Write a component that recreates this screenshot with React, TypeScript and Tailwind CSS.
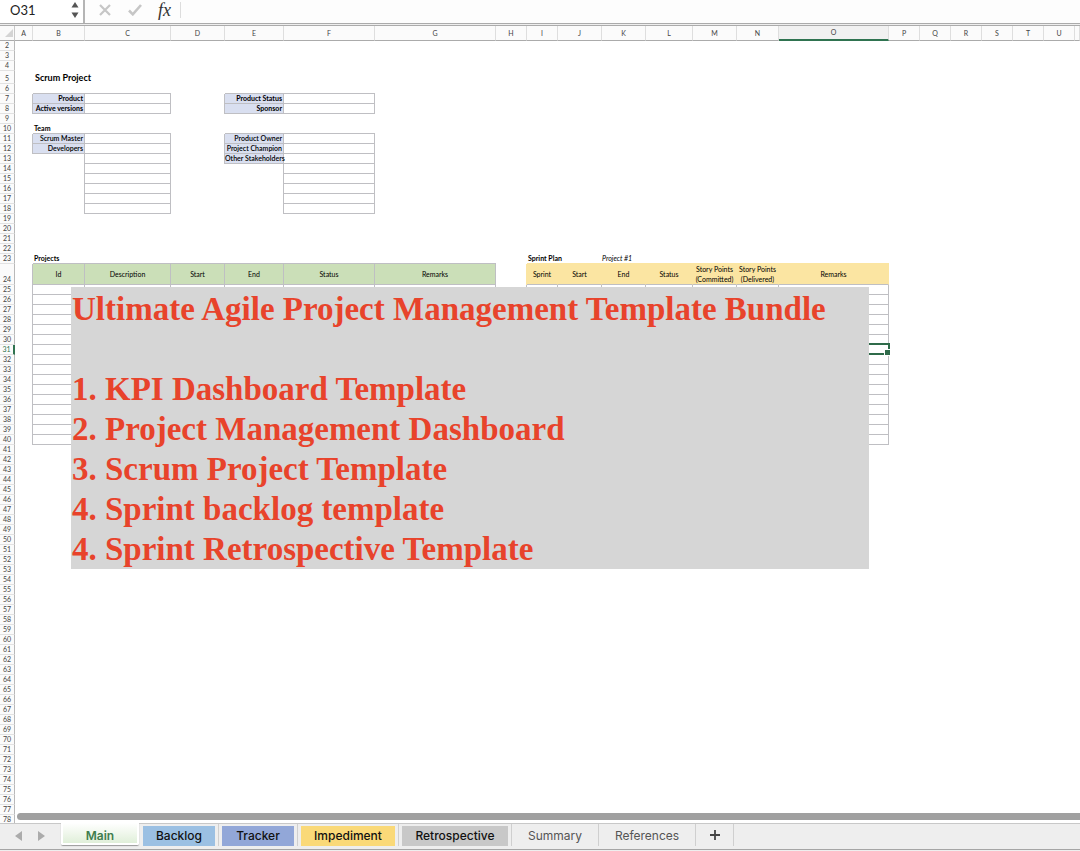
import React, { useState } from 'react';
import clsx from 'clsx';

interface Column {
  name: string;
  width: string;
}

interface Box {
  from: string;
  to: string;
  top: number;
  bottom: number;
}

interface CellContent {
  text: React.ReactNode;
  className: string;
}

interface SheetTab {
  name: string;
  className: string;
}

const columns: Column[] = [
  { name: 'A', width: 'w-[18px]' },
  { name: 'B', width: 'w-[52px]' },
  { name: 'C', width: 'w-[86px]' },
  { name: 'D', width: 'w-[54px]' },
  { name: 'E', width: 'w-[59px]' },
  { name: 'F', width: 'w-[91px]' },
  { name: 'G', width: 'w-[121px]' },
  { name: 'H', width: 'w-[31px]' },
  { name: 'I', width: 'w-[31px]' },
  { name: 'J', width: 'w-[44px]' },
  { name: 'K', width: 'w-[44px]' },
  { name: 'L', width: 'w-[47px]' },
  { name: 'M', width: 'w-[44px]' },
  { name: 'N', width: 'w-[42px]' },
  { name: 'O', width: 'w-[110px]' },
  { name: 'P', width: 'w-[31px]' },
  { name: 'Q', width: 'w-[31px]' },
  { name: 'R', width: 'w-[31px]' },
  { name: 'S', width: 'w-[31px]' },
  { name: 'T', width: 'w-[31px]' },
  { name: 'U', width: 'w-[31px]' },
  { name: '', width: '' },
];

const rows = Array.from({ length: 77 }, (_, i) => i + 2);

// Areas of the sheet that have grid lines
const boxes: Box[] = [
  { from: 'B', to: 'C', top: 7, bottom: 8 },
  { from: 'E', to: 'F', top: 7, bottom: 8 },
  { from: 'B', to: 'B', top: 11, bottom: 12 },
  { from: 'C', to: 'C', top: 11, bottom: 18 },
  { from: 'E', to: 'E', top: 11, bottom: 13 },
  { from: 'F', to: 'F', top: 11, bottom: 18 },
  { from: 'B', to: 'G', top: 24, bottom: 40 },
  { from: 'I', to: 'O', top: 25, bottom: 40 },
];

const label = 'bg-[#d9dff0] text-right font-bold pr-px';
const role = 'bg-[#d9dff0] text-right font-semibold pr-px';
const heading = 'text-left font-bold pl-px';
const green = 'bg-[#cbdfb8] text-center';
const yellow = 'bg-[#fbe5a2] text-center';

const cells: Record<string, CellContent> = {
  B5: { text: 'Scrum Project', className: 'text-left font-bold text-[9px] pl-[2px]' },
  B7: { text: 'Product', className: label },
  B8: { text: 'Active versions', className: label },
  E7: { text: 'Product Status', className: label },
  E8: { text: 'Sponsor', className: label },
  B10: { text: 'Team', className: heading },
  B11: { text: 'Scrum Master', className: role },
  B12: { text: 'Developers', className: role },
  E11: { text: 'Product Owner', className: role },
  E12: { text: 'Project Champion', className: role },
  E13: { text: 'Other Stakeholders', className: role },
  B23: { text: 'Projects', className: heading },
  I23: { text: 'Sprint Plan', className: heading },
  K23: { text: 'Project #1', className: 'text-left italic' },
  B24: { text: 'Id', className: green },
  C24: { text: 'Description', className: green },
  D24: { text: 'Start', className: green },
  E24: { text: 'End', className: green },
  F24: { text: 'Status', className: green },
  G24: { text: 'Remarks', className: green },
  I24: { text: 'Sprint', className: yellow },
  J24: { text: 'Start', className: yellow },
  K24: { text: 'End', className: yellow },
  L24: { text: 'Status', className: yellow },
  M24: { text: <>Story Points<br />(Committed)</>, className: yellow },
  N24: { text: <>Story Points<br />(Delivered)</>, className: yellow },
  O24: { text: 'Remarks', className: yellow },
};

const tabs: SheetTab[] = [
  { name: 'Backlog', className: 'w-[72px] bg-[#9bc0e3] text-[#111]' },
  { name: 'Tracker', className: 'w-[72px] bg-[#92a7d8] text-[#111]' },
  { name: 'Impediment', className: 'w-[94px] bg-[#fad978] text-[#111]' },
  { name: 'Retrospective', className: 'w-[106px] bg-[#c8c8c8] text-[#111]' },
  { name: 'Summary', className: 'w-20 font-normal text-[#555]' },
  { name: 'References', className: 'w-[90px] font-normal text-[#555]' },
];

const bundle = [
  '1. KPI Dashboard Template',
  '2. Project Management Dashboard',
  '3. Scrum Project Template',
  '4. Sprint backlog template',
  '4. Sprint Retrospective Template',
];

function inBox(col: string | undefined, row: number) {
  if (!col) return false;
  return boxes.some((b) => col >= b.from && col <= b.to && row >= b.top && row <= b.bottom);
}

function Cell({ index, row }: { index: number; row: number }) {
  const col = columns[index].name;
  const next = columns[index + 1]?.name;
  const content = cells[`${col}${row}`];
  const selected = col === 'O' && row === 31;
  const aboveYellow = row === 23 && col >= 'I' && col <= 'O';
  const besideYellow = row === 24 && col >= 'H' && col <= 'O';

  return (
    <td
      className={clsx(
        'p-0 align-middle whitespace-nowrap',
        row === 24 ? 'leading-[10px]' : 'leading-[9px]',
        (inBox(col, row) || inBox(next, row)) && 'border-r border-r-[#bfbfc3]',
        (inBox(col, row) || inBox(col, row + 1)) && 'border-b border-b-[#bfbfc3]',
        aboveYellow && 'border-b border-b-[#fbe5a2]',
        besideYellow && 'border-r border-r-[#fbe5a2]',
        selected && 'relative',
        content?.className
      )}
    >
      {content?.text}
      {selected && (
        <div className="absolute -top-[2px] -right-[2px] -bottom-px -left-px border-2 border-[#2f6b4a]">
          <div className="absolute -right-[3px] -bottom-[3px] h-[7px] w-[7px] border border-white bg-[#2f6b4a]" />
        </div>
      )}
    </td>
  );
}

function FormulaBar() {
  return (
    <div className="flex h-[26px] shrink-0 flex-col bg-[#fdfdfd]">
      <div className="flex h-[23px] items-center">
        <div className="flex h-full w-[85px] items-center justify-between border-r-2 border-[#b5b5b5] bg-white pr-1 pb-[3px] pl-[10px]">
          <input
            aria-label="Name box"
            defaultValue="O31"
            className="h-5 w-12 bg-transparent font-['Lato',sans-serif] text-[13px] text-[#222] outline-none"
          />
          <div className="flex flex-col gap-1">
            <button aria-label="Previous name" className="block">
              <svg width="8" height="6" viewBox="0 0 8 6" fill="#555">
                <path d="M4 0 7.5 5.5H.5z" />
              </svg>
            </button>
            <button aria-label="Next name" className="block">
              <svg width="8" height="6" viewBox="0 0 8 6" fill="#555">
                <path d="M4 6 7.5.5H.5z" />
              </svg>
            </button>
          </div>
        </div>
        <div className="flex h-full min-w-0 flex-1 items-center pb-[3px]">
          <button aria-label="Cancel" className="ml-[14px]">
            <svg width="12" height="12" viewBox="0 0 12 12" stroke="#c6c6c6" strokeWidth="2.2" fill="none">
              <path d="M1 1 11 11M11 1 1 11" />
            </svg>
          </button>
          <button aria-label="Enter" className="ml-[17px]">
            <svg width="14" height="12" viewBox="0 0 14 12" stroke="#c6c6c6" strokeWidth="2.6" fill="none">
              <path d="M1 6.5 4.8 10.3 13 1" />
            </svg>
          </button>
          <button
            aria-label="Insert function"
            className="ml-4 w-4 text-left font-['Liberation_Serif',serif] text-[18px] leading-5 text-[#333] italic"
          >
            fx
          </button>
          <div className="ml-[6px] h-4 w-px bg-[#ddd]" />
          <input aria-label="Formula" className="h-5 min-w-0 flex-1 bg-transparent px-2 text-xs outline-none" />
        </div>
      </div>
      <div className="h-[3px] border-y border-[#ababab] bg-[#eee]" />
    </div>
  );
}

function Sheet() {
  return (
    <table className="w-full table-fixed border-separate border-spacing-0 font-['Lato',sans-serif] text-[7px] text-black">
      <colgroup>
        <col className="w-[15px]" />
        {columns.map((c, i) => (
          <col key={i} className={c.width} />
        ))}
      </colgroup>
      <thead>
        <tr className="h-[15px] text-[#444]">
          <th className="border-r border-b border-r-[#c9c9c9] border-b-[#ababab] bg-[#fafafa] p-0">
            <svg className="ml-[5px]" width="8" height="8" viewBox="0 0 8 8" fill="#d4d4d4">
              <path d="M8 0V8H0z" />
            </svg>
          </th>
          {columns.map((c, i) => (
            <th
              key={i}
              className={clsx(
                'border-r border-r-[#dedede] p-0 leading-[13px] font-normal',
                c.name === 'O'
                  ? 'border-b-2 border-b-[#2f7350] bg-[#f1f1f1]'
                  : 'border-b border-b-[#ababab] bg-[#fbfbfb]'
              )}
            >
              {c.name}
            </th>
          ))}
        </tr>
      </thead>
      <tbody>
        {rows.map((row) => (
          <tr key={row} className={row === 5 ? 'h-[13px]' : row === 24 ? 'h-[21px]' : 'h-[10px]'}>
            <th
              className={clsx(
                'border-b border-b-[#e2e2e2] bg-[#fbfbfb] p-0 align-bottom leading-[9px] font-normal',
                row === 31
                  ? 'border-r-2 border-r-[#2f7350] text-[#2f7350]'
                  : 'border-r border-r-[#b9b9b9] text-[#444]'
              )}
            >
              {row}
            </th>
            {columns.map((_, i) => (
              <Cell key={i} index={i} row={row} />
            ))}
          </tr>
        ))}
      </tbody>
    </table>
  );
}

function TabBar() {
  const [active, setActive] = useState('Main');

  return (
    <div className="flex h-7 shrink-0 items-start border-t border-[#c8c8c8] bg-[#eee] font-['Inter',sans-serif] text-xs">
      <div className="flex h-[26px] w-full items-start border-b border-[#a5a5a5]">
        <div className="flex h-6 w-[61px] shrink-0 items-center gap-4 pl-[15px]">
          <button aria-label="Previous sheet">
            <svg width="7" height="10" viewBox="0 0 7 10" fill="#ababab">
              <path d="M7 0V10L0 5z" />
            </svg>
          </button>
          <button aria-label="Next sheet">
            <svg width="7" height="10" viewBox="0 0 7 10" fill="#ababab">
              <path d="M0 0V10L7 5z" />
            </svg>
          </button>
        </div>
        <button
          onClick={() => setActive('Main')}
          aria-pressed={active === 'Main'}
          className="-mt-px h-[22px] w-[78px] shrink-0 rounded-b-xs border-x-2 border-b-2 border-white bg-linear-to-b from-white to-[#e0efd9] pt-[5px] leading-[15px] font-semibold text-[#3f7d4e] shadow-[0_1px_1px_#999]"
        >
          Main
        </button>
        <div className="flex pl-px">
          {tabs.map((tab) => (
            <div key={tab.name} className="flex h-[22px] shrink-0 items-end border-r border-[#cfcfcf] px-[3px]">
              <button
                onClick={() => setActive(tab.name)}
                aria-pressed={active === tab.name}
                className={clsx('h-5 font-medium', tab.className)}
              >
                {tab.name}
              </button>
            </div>
          ))}
        </div>
        <button aria-label="Add sheet" className="flex h-[22px] w-[38px] items-center justify-center border-r border-[#cfcfcf]">
          <svg width="10" height="10" viewBox="0 0 10 10" stroke="#444" strokeWidth="1.8">
            <path d="M5 0V10M0 5H10" />
          </svg>
        </button>
      </div>
    </div>
  );
}

export default function App() {
  return (
    <div className="flex h-screen flex-col overflow-hidden bg-white">
      <FormulaBar />
      <main className="relative min-h-0 flex-1 overflow-hidden">
        <Sheet />
        {/* Text box that floats over the cells */}
        <div className="absolute top-[261px] left-[71px] w-[798px] bg-[#d6d6d6] pt-[2px] pl-px font-['Liberation_Serif',serif] text-[33px] leading-10 font-bold whitespace-nowrap text-[#e8432b]">
          <h1>Ultimate Agile Project Management Template Bundle</h1>
          <ul className="pt-10">
            {bundle.map((item) => (
              <li key={item}>{item}</li>
            ))}
          </ul>
        </div>
        <div className="absolute right-0 bottom-[3px] left-[17px] h-[7px] rounded-l-full bg-[#a0a0a0]" />
      </main>
      <TabBar />
    </div>
  );
}
